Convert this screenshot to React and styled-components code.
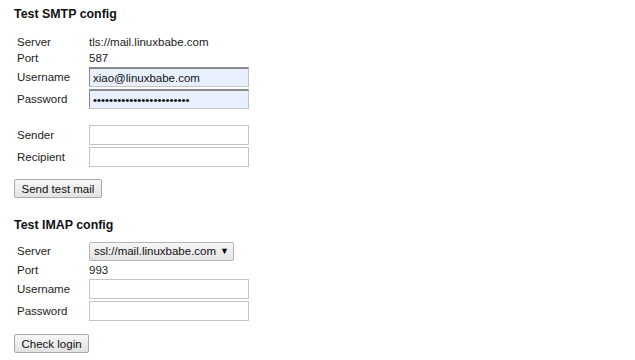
import React from "react";
import styled, { createGlobalStyle } from "styled-components";

const GlobalStyle = createGlobalStyle`
  html, body {
    margin: 0;
    padding: 0;
    background: #ffffff;
  }
  body {
    font-family: "Liberation Sans", Arial, sans-serif;
    font-size: 11.5px;
    color: #222;
  }
`;

const Page = styled.div`
  padding: 7px 14px;
  display: flex;
  flex-direction: column;
`;

const Heading = styled.h3`
  margin: 0 0 ${(p) => p.$after || 14}px 0;
  font-size: 12.4px;
  font-weight: bold;
  color: #111;
  line-height: 14px;
`;

const Form = styled.div`
  display: grid;
  grid-template-columns: 72px 160px;
  padding-left: 3px;
  align-items: center;
`;

const Label = styled.div`
  height: ${(p) => (p.$input ? 22 : 16)}px;
  line-height: ${(p) => (p.$input ? 22 : 16)}px;
  white-space: nowrap;
`;

const Value = styled.div`
  height: 16px;
  line-height: 16px;
  white-space: nowrap;
`;

const Spacer = styled.div`
  grid-column: 1 / 3;
  height: 14px;
`;

const Field = styled.input`
  box-sizing: border-box;
  width: 160px;
  height: 20px;
  margin: 1px 0;
  padding: 0 3px;
  font-family: "Liberation Sans", Arial, sans-serif;
  font-size: 11.5px;
  color: #111;
  background: ${(p) => (p.$filled ? "#e8f0fe" : "#ffffff")};
  border: 1px solid #c4c4c4;
  border-top-color: ${(p) => (p.$filled ? "#8a8a8a" : "#c4c4c4")};
  border-left-color: ${(p) => (p.$filled ? "#8a8a8a" : "#c4c4c4")};
  border-top-width: ${(p) => (p.$filled ? 2 : 1)}px;
  border-radius: 0;
  outline: none;
  display: block;
`;

const Select = styled.div`
  box-sizing: border-box;
  width: 145px;
  height: 19px;
  padding: 0 4px 0 4px;
  display: flex;
  align-items: center;
  justify-content: space-between;
  background: linear-gradient(#f6f6f6, #e4e4e4);
  border: 1px solid #b4b4b4;
  border-radius: 2px;
  color: #111;
  font-size: 11.5px;
  white-space: nowrap;
  margin: 1px 0;
`;

const Caret = styled.span`
  font-size: 9px;
  color: #000;
  margin-left: 4px;
`;

const Button = styled.button`
  align-self: flex-start;
  box-sizing: border-box;
  height: 19px;
  padding: 0 6.5px;
  font-family: "Liberation Sans", Arial, sans-serif;
  font-size: 11.5px;
  color: #111;
  background: linear-gradient(#f7f7f7, #e2e2e2);
  border: 1px solid #aaaaaa;
  border-radius: 2px;
  margin: ${(p) => p.$top || 0}px 0 ${(p) => p.$bottom || 0}px 0;
`;

export default function App() {
  return (
    <>
      <GlobalStyle />
      <Page>
        <Heading $after={13}>Test SMTP config</Heading>
        <Form>
          <Label>Server</Label>
          <Value>tls://mail.linuxbabe.com</Value>
          <Label>Port</Label>
          <Value>587</Value>
          <Label $input>Username</Label>
          <Field $filled defaultValue="xiao@linuxbabe.com" />
          <Label $input>Password</Label>
          <Field $filled type="password" defaultValue="xiaolinuxbabepassword123" />
          <Spacer />
          <Label $input>Sender</Label>
          <Field />
          <Label $input>Recipient</Label>
          <Field />
        </Form>
        <Button $top={11} $bottom={20}>Send test mail</Button>
        <Heading $after={8}>Test IMAP config</Heading>
        <Form>
          <Label $input>Server</Label>
          <div>
            <Select>
              ssl://mail.linuxbabe.com<Caret>▼</Caret>
            </Select>
          </div>
          <Label>Port</Label>
          <Value>993</Value>
          <Label $input>Username</Label>
          <Field />
          <Label $input>Password</Label>
          <Field />
        </Form>
        <Button $top={12}>Check login</Button>
      </Page>
    </>
  );
}
